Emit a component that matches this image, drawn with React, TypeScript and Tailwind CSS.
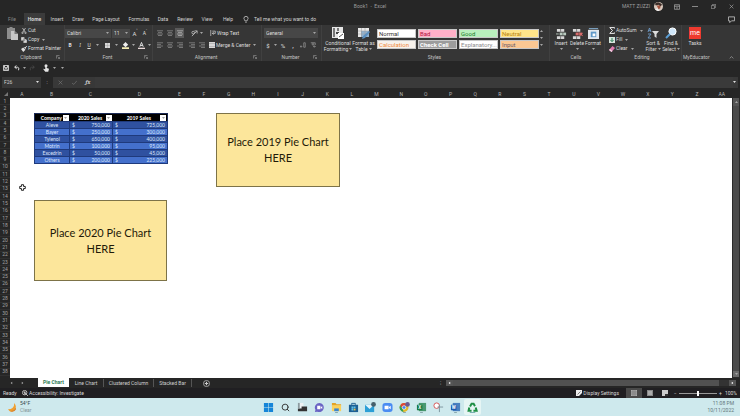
import type { ReactNode } from "react";
import { Search } from "lucide-react";

const sales = [
  ["Aleve", "750,000", "725,000"],
  ["Bayer", "250,000", "300,000"],
  ["Tylenol", "650,000", "400,000"],
  ["Motrin", "100,000", "95,000"],
  ["Excedrin", "50,000", "45,000"],
  ["Others", "200,000", "225,000"],
];

const columns = "A B C D E F G H I J K L M N O P Q R S T U V W X Y Z AA".split(" ");
const rows = Array.from({ length: 38 }, (_, i) => i + 1);

const menu: [string, string][] = [
  ["File", "w-6 text-[#8a8a8a]"],
  ["Home", "w-[21px] bg-[#3b3b3b] font-bold"],
  ["Insert", "w-6"],
  ["Draw", "w-[18px]"],
  ["Page Layout", "w-[38px]"],
  ["Formulas", "w-7"],
  ["Data", "w-5"],
  ["Review", "w-6"],
  ["View", "w-5"],
  ["Help", "w-[22px]"],
];

const styles: [string, string][] = [
  ["Normal", "bg-white text-[#333]"],
  ["Bad", "bg-[#ffb0c8] text-[#b0103c]"],
  ["Good", "bg-[#b9f0bd] text-[#1c7a2c]"],
  ["Neutral", "bg-[#ffe58a] text-[#b98410]"],
  ["Calculation", "bg-[#f7f2ec] text-[#f08a3c]"],
  ["Check Cell", "bg-[#9c9c9c] text-white font-bold"],
  ["Explanatory...", "bg-white text-[#8d8d8d]"],
  ["Input", "bg-[#fcc893] text-[#6a5a6a]"],
];

function Caret({ className = "" }: { className?: string }) {
  return (
    <svg viewBox="0 0 6 4" className={`h-[2px] w-[3px] shrink-0 fill-[#a5a5a5] ${className}`}>
      <path d="M0 0h6L3 4z" />
    </svg>
  );
}

function Icon({ label, className = "w-[10px]", children }: { label: string; className?: string; children: ReactNode }) {
  return (
    <button aria-label={label} className={`flex h-[10px] shrink-0 items-center justify-center ${className}`}>
      {children}
    </button>
  );
}

function Lines({ align, bright }: { align: "left" | "center" | "right"; bright?: boolean }) {
  const x = align === "left" ? 0 : align === "center" ? 1 : 2;
  return (
    <svg viewBox="0 0 6 6" className="size-[6px]" stroke={bright ? "#b0b0b0" : "#858585"} strokeWidth=".8">
      <path d={`M0 .8h6M${x} 2.4h4M0 4h6M${x} 5.5h4`} />
    </svg>
  );
}

function Group({ label, launcher, className, children }: { label: string; launcher?: boolean; className: string; children: ReactNode }) {
  return (
    <section aria-label={label} className={`flex shrink-0 flex-col border-r border-[#404040] ${className}`}>
      <div className="flex h-7 pt-px">{children}</div>
      <div className="flex h-2 items-center">
        <span className="w-[6px]" />
        <span className="flex-1 text-center text-[#c4c4c4]">{label}</span>
        <span className="w-2">
          {launcher && (
            <svg viewBox="0 0 8 8" className="size-1" fill="none" stroke="#a8a8a8">
              <path d="M1 7V1h6M3 3l4 4M7 4v3H4" />
            </svg>
          )}
        </span>
      </div>
    </section>
  );
}

function BigButton({ lines, caret, className = "w-4", children }: { lines: string[]; caret?: boolean; className?: string; children: ReactNode }) {
  return (
    <button className={`flex shrink-0 flex-col items-center ${className}`}>
      <span className="flex h-[14px] items-center justify-center">{children}</span>
      {lines.map((line, i) => (
        <span key={line} className="flex h-[6px] items-center gap-px leading-[6px] whitespace-nowrap">
          {line}
          {caret && i === lines.length - 1 && lines.length > 1 && <Caret />}
        </span>
      ))}
      {caret && lines.length === 1 && <Caret className="mt-[2px]" />}
    </button>
  );
}

function SmallButton({ label, caret, children }: { label: string; caret?: boolean; children: ReactNode }) {
  return (
    <button className="flex h-[9px] items-center gap-px whitespace-nowrap">
      <span className="flex w-[7px] justify-center">{children}</span>
      {label}
      {caret && <Caret className="ml-[2px]" />}
    </button>
  );
}

function CellsIcon({ accent, arrow }: { accent: string; arrow: string }) {
  return (
    <svg viewBox="0 0 12 12" className="size-[11px]">
      <path fill="#d8d8d8" d="M1 1h8v3H1zM1 9h8v3H1z" />
      <path fill={accent} d="M4 5h7v3H4z" />
      <path stroke="#333" strokeWidth=".6" d="M5 1v3M5 9v3M7.500 5v3" />
      <path d={arrow} stroke={accent} fill="none" />
    </svg>
  );
}

function Ribbon() {
  return (
    <div className="flex h-9 shrink-0 overflow-hidden bg-[#363636] text-[#dedede]">
      <Group label="Clipboard" launcher className="w-[65px]">
        <Icon label="Paste" className="ml-[6px] h-[14px] w-[12px]">
          <svg viewBox="0 0 12 13" className="h-[13px] w-[12px]">
            <path fill="#8d8d8d" d="M1 1h2.500V0h3v1H9v11H1z" />
            <path fill="#c6c6c6" d="M5 4h3.500L12 7v6H5z" />
            <path fill="#777" d="M8.500 4v3H12z" />
          </svg>
        </Icon>
        <div className="ml-[2px] flex flex-col">
          <SmallButton label="Cut">
            <svg viewBox="0 0 8 8" className="size-[6px]" fill="none" stroke="#d0d0d0">
              <path d="M2 0l3.500 5.500M6 0L2.500 5.500" /><circle cx="2" cy="6.500" r="1" /><circle cx="6" cy="6.500" r="1" />
            </svg>
          </SmallButton>
          <SmallButton label="Copy" caret>
            <svg viewBox="0 0 8 8" className="size-[6px]" fill="#dadada" stroke="#363636" strokeWidth=".5">
              <path d="M0 0h4l1 1v4H0zM3 2.500h3.500L8 4v4H3z" />
            </svg>
          </SmallButton>
          <SmallButton label="Format Painter">
            <svg viewBox="0 0 8 8" className="size-[6px]">
              <path fill="#e0e0e0" d="M0 4l3-2 3 3-3 3zM4 2l2-1 1 1-1 2z" /><path stroke="#e0e0e0" d="M5.500 2.500L8 0" />
            </svg>
          </SmallButton>
        </div>
      </Group>

      <Group label="Font" launcher className="w-[88px]">
        <div className="flex flex-col gap-[2px] pt-[2px]">
          <div className="flex h-[10px] items-center">
            <label className="flex h-[9px] w-[46px] items-center bg-[#474747] pr-[2px] pl-[2px]">
              <select aria-label="Font name" className="w-full appearance-none"><option>Calibri</option></select>
              <Caret />
            </label>
            <label className="ml-px flex h-[9px] w-[18px] items-center bg-[#474747] pr-[2px] pl-[2px]">
              <select aria-label="Font size" className="w-full appearance-none"><option>11</option></select>
              <Caret />
            </label>
            <Icon label="Increase font size"><span className="text-[6px]">A<sup>˄</sup></span></Icon>
            <Icon label="Decrease font size">A<sup>˅</sup></Icon>
          </div>
          <div className="flex h-[10px] items-center">
            <Icon label="Bold"><b>B</b></Icon>
            <Icon label="Italic"><i className="font-serif">I</i></Icon>
            <Icon label="Underline" className="w-2"><u>U</u></Icon>
            <Icon label="Underline options" className="w-2"><Caret /></Icon>
            <Icon label="Borders" className="w-3">
              <svg viewBox="0 0 6 6" className="size-[5px]"><path fill="#d6d6d6" d="M0 0h6v6H0z" /><path stroke="#999" strokeWidth=".5" d="M3 0v6M0 3h6" /></svg>
            </Icon>
            <Icon label="Border options" className="w-[6px]"><Caret /></Icon>
            <Icon label="Fill colour" className="w-3">
              <svg viewBox="0 0 8 8" className="size-[7px]"><path fill="#eee" d="M1 3l3-3 3 3-3 3z" /><path fill="#f5ecb4" d="M0 6h8v2H0z" /></svg>
            </Icon>
            <Icon label="Fill options" className="w-[4px]"><Caret /></Icon>
            <Icon label="Font colour" className="w-3">
              <svg viewBox="0 0 8 8" className="size-[7px]"><path fill="none" stroke="#eee" d="M2 5.500L4 .5l2 5M2.700 4h2.600" /><path fill="#eadada" d="M0 6.500h8V8H0z" /></svg>
            </Icon>
            <Icon label="Font colour options" className="w-[4px]"><Caret /></Icon>
          </div>
        </div>
      </Group>

      <Group label="Alignment" launcher className="w-[109px]">
        <div className="flex flex-col gap-[2px] pt-[2px] pl-[2px]">
          <div className="flex h-[10px] items-center">
            <Icon label="Top align"><Lines align="center" /></Icon>
            <Icon label="Middle align"><Lines align="center" /></Icon>
            <Icon label="Bottom align" className="w-[9px] bg-[#5a5a5a]"><Lines align="center" bright /></Icon>
            <Icon label="Orientation" className="ml-1 w-3">
              <svg viewBox="0 0 8 8" className="size-[7px]" fill="none" stroke="#b8b8b8"><path d="M1 7l6-6M4 1h3v3" /><circle cx="2.500" cy="3" r="1.500" /></svg>
            </Icon>
            <Caret />
            <button className="ml-[7px] flex items-center gap-px whitespace-nowrap">
              <svg viewBox="0 0 8 8" className="size-[6px]" fill="none" stroke="#c8c8c8"><path d="M1 0v8M3 1.500h4v3H3M5 3L3 4.500 5 6" /></svg>
              Wrap Text
            </button>
          </div>
          <div className="flex h-[10px] items-center">
            <Icon label="Align left"><Lines align="left" /></Icon>
            <Icon label="Centre"><Lines align="center" /></Icon>
            <Icon label="Align right" className="w-[9px]"><Lines align="right" /></Icon>
            <Icon label="Decrease indent" className="ml-[3px] w-[10px]"><Lines align="right" /></Icon>
            <Icon label="Increase indent" className="w-[9px]"><Lines align="right" /></Icon>
            <button className="ml-[3px] flex items-center gap-px whitespace-nowrap">
              <svg viewBox="0 0 6 6" className="size-[6px]"><path fill="#d9d9d9" d="M0 0h6v6H0z" /><path stroke="#888" strokeWidth=".4" d="M0 1.500h6M0 4.500h6" /></svg>
              Merge &amp; Center
              <Caret className="ml-[2px]" />
            </button>
          </div>
        </div>
      </Group>

      <Group label="Number" launcher className="w-[60px]">
        <div className="flex flex-col gap-[2px] pt-[2px] pl-[2px]">
          <label className="flex h-[10px] w-[54px] items-center bg-[#474747] px-[2px]">
            <select aria-label="Number format" className="w-full appearance-none"><option>General</option></select>
            <Caret />
          </label>
          <div className="flex h-[10px] items-center text-[6px]">
            <Icon label="Accounting format" className="w-2">$</Icon>
            <Icon label="Accounting options" className="w-[6px]"><Caret /></Icon>
            <Icon label="Percent"><span>%</span></Icon>
            <Icon label="Comma"><b>,</b></Icon>
            <Icon label="Increase decimal">
              <svg viewBox="0 0 8 8" className="size-[6px]" fill="none" stroke="#909090"><path d="M0 6h3M1.500 4.500L0 6l1.500 1.500M5 1h2v6H5z" /></svg>
            </Icon>
            <Icon label="Decrease decimal">
              <svg viewBox="0 0 8 8" className="size-[6px]" fill="none" stroke="#909090"><path d="M1 1h6v3M3 1v3h2V1M4 6h3M5.500 4.500L7 6 5.500 7.500" /></svg>
            </Icon>
          </div>
        </div>
      </Group>

      <Group label="Styles" className="w-[228px]">
        <BigButton lines={["Conditional", "Formatting"]} caret className="ml-[2px] w-7">
          <svg viewBox="0 0 12 12" className="size-3">
            <path fill="#e6e6e6" d="M0 0h11v11H0z" /><path fill="#777" d="M1 1h2v9H1zM5 1h2v3H5z" /><path fill="#444" d="M4 5h3v2H4z" />
            <path fill="#fff" d="M6 6h6v6H6z" /><path stroke="#555" d="M7 10l4-3" />
          </svg>
        </BigButton>
        <BigButton lines={["Format as", "Table"]} caret className="w-[23px]">
          <svg viewBox="0 0 12 12" className="size-3">
            <path fill="#e8e8e8" d="M0 1h11v9H0z" /><path fill="#92b2cf" d="M3 4h8v6H3z" /><path stroke="#999" strokeWidth=".5" d="M0 4h11M0 7h11M3.500 1v9M7 1v9" /><path fill="#5b8fbf" d="M4 12l1-3 6-5 1 1-5 6z" />
          </svg>
        </BigButton>
        <div className="ml-[2px] grid h-[23px] grid-cols-4 content-start gap-[2px] pt-[3px]">
          {styles.map(([name, look]) => (
            <button key={name} className={`h-[9px] w-[39px] border border-[#c8c8c8] pl-px text-left text-[6px] leading-[7px] ${look}`}>{name}</button>
          ))}
        </div>
        <div className="ml-px flex flex-col gap-[5px] pt-[4px]">
          <Caret className="rotate-180" /><Caret /><Caret />
        </div>
      </Group>

      <Group label="Cells" className="w-[55px]">
        <BigButton lines={["Insert"]} caret className="ml-[3px] w-4"><CellsIcon accent="#b9cbbf" arrow="M3 6.500H0" /></BigButton>
        <BigButton lines={["Delete"]} caret><CellsIcon accent="#d86b6b" arrow="M8 5l4 4M12 5L8 9" /></BigButton>
        <BigButton lines={["Format"]} caret>
          <svg viewBox="0 0 12 12" className="size-[11px]"><path fill="#e2e8ee" d="M0 2h12v10H0z" /><path fill="#5f98c8" d="M3 4h6v6H3z" /><path fill="#fff" d="M5 6h3v3H5z" /><path stroke="#8cbbe0" d="M1 .7h10" /></svg>
        </BigButton>
      </Group>

      <Group label="Editing" className="w-[77px]">
        <div className="ml-[3px] flex w-[36px] flex-col">
          <SmallButton label="AutoSum" caret>
            <svg viewBox="0 0 6 7" className="h-[7px] w-[6px]" fill="none" stroke="#eee"><path d="M5.500 1.500V.6H.8L3.500 3.500.8 6.400h4.700V5.500" /></svg>
          </SmallButton>
          <SmallButton label="Fill" caret>
            <svg viewBox="0 0 6 6" className="size-[6px]"><path fill="#d6e6dd" d="M0 0h6v6H0z" /><path stroke="#2d8058" fill="none" d="M3 1v3.500M1.500 3L3 4.600 4.500 3" /></svg>
          </SmallButton>
          <SmallButton label="Clear" caret>
            <svg viewBox="0 0 6 6" className="size-[6px]"><path fill="#e07ab0" d="M0 4l3.500-4L6 2 2.500 6z" /><path fill="#f2d5e4" d="M0 4l1-1 2.500 2-1 1z" /></svg>
          </SmallButton>
        </div>
        <BigButton lines={["Sort &", "Filter"]} caret className="w-[18px]">
          <svg viewBox="0 0 12 12" className="size-3"><path fill="none" stroke="#6f9cc8" strokeWidth=".9" d="M1 5l1.500-4L4 5M1.500 3.700h2M1 7h3l-3 4h3" /><path fill="#dcdcdc" d="M5 4h7L9.500 7v4L7.500 9.500V7z" /></svg>
        </BigButton>
        <BigButton lines={["Find &", "Select"]} caret className="w-[18px]">
          <svg viewBox="0 0 12 12" className="size-3"><circle cx="7.500" cy="4.500" r="3.600" fill="#cfe6f8" stroke="#fff" /><path stroke="#5c9fd6" strokeWidth="2" d="M5 7l-4 4" /></svg>
        </BigButton>
      </Group>

      <section aria-label="MyEducator" className="flex min-w-0 flex-1 flex-col">
        <div className="flex h-7 pt-px pl-1">
          <BigButton lines={["Tasks"]} className="w-[18px]">
            <span className="flex size-3 items-center justify-center bg-[#ee3a2f] text-[7px] leading-none text-white">me</span>
          </BigButton>
        </div>
        <div className="flex h-2 items-center justify-between pr-[6px] pl-px">
          <span className="text-[#c4c4c4]">MyEducator</span>
          <svg viewBox="0 0 8 5" className="h-[3px] w-[5px]" fill="none" stroke="#bbb"><path d="M1 4l3-3 3 3" /></svg>
        </div>
      </section>
    </div>
  );
}

function TopBar() {
  return (
    <>
      <header className="grid h-[13px] shrink-0 grid-cols-3 items-center text-[#9d9d9d]">
        <span />
        <span className="text-center">Book1&nbsp; -&nbsp; Excel</span>
        <div className="flex items-center justify-end">
          <span>MATT ZUZZI</span>
          <svg viewBox="0 0 10 10" className="mr-[9px] ml-1 size-[9px]">
            <circle cx="5" cy="5" r="5" fill="#d9c8bd" /><path fill="#3b2d28" d="M1 2Q5-2 9 3L7 5 5 3 2 4z" /><path fill="#a5543f" d="M3 4h4v3L5 8z" /><path fill="#eee" d="M1 8l3-1 2 3H4z" />
          </svg>
          <Icon label="Ribbon display options" className="w-[10px]">
            <svg viewBox="0 0 8 8" className="size-[6px]" fill="none" stroke="#aaa"><path d="M.5 1h7v6h-7zM.5 3h7M4 6.500V4" /></svg>
          </Icon>
          <Icon label="Minimize" className="ml-2 w-[10px]"><span className="h-px w-[6px] bg-[#888]" /></Icon>
          <Icon label="Restore" className="ml-2 w-[10px]">
            <svg viewBox="0 0 8 8" className="size-[5px]" fill="none" stroke="#aaa"><path d="M.5 2.500h5v5h-5zM2.500 2V.5h5v5H6" /></svg>
          </Icon>
          <Icon label="Close" className="mr-1 ml-2 w-[10px]">
            <svg viewBox="0 0 8 8" className="size-[5px]" stroke="#aaa"><path d="M1 1l6 6M7 1L1 7" /></svg>
          </Icon>
        </div>
      </header>
      <nav className="flex h-3 shrink-0 items-center text-[#d4d4d4]">
        {menu.map(([name, look]) => (
          <button key={name} className={`h-full shrink-0 text-center whitespace-nowrap ${look}`}>{name}</button>
        ))}
        <svg viewBox="0 0 8 10" className="mr-[5px] ml-1 h-[7px] w-[6px]" fill="none" stroke="#ddd"><path d="M2.500 7C2.500 5.500 1 5 1 3.500a3 3 0 016 0C7 5 5.500 5.500 5.500 7zM3 9h2" /></svg>
        <button className="whitespace-nowrap">Tell me what you want to do</button>
        <button aria-label="Comments" className="mr-[5px] ml-auto">
          <svg viewBox="0 0 8 8" className="size-[7px]" fill="none" stroke="#bbb"><path d="M.5 1h7v4.500H4L2 7.500v-2H.5z" /></svg>
        </button>
      </nav>
    </>
  );
}

function QuickAccess() {
  return (
    <div className="flex h-[14px] shrink-0 items-center pl-[2px]">
      <Icon label="Save" className="w-2">
        <svg viewBox="0 0 8 8" className="size-[6px]" fill="none" stroke="#ddd" strokeWidth="1.200"><path d="M.6.6h6.800v6.800H.6zM2 1v2.500h4V1M2.500 7V5h3v2" /></svg>
      </Icon>
      <Icon label="Undo" className="ml-[3px] w-2">
        <svg viewBox="0 0 8 8" className="size-[6px]" fill="none" stroke="#ddd" strokeWidth="1.300"><path d="M3 .5L1 3l2.500 2M1 3h4q2.500.5 1 4" /></svg>
      </Icon>
      <Icon label="Undo options" className="w-[6px]"><Caret /></Icon>
      <Icon label="Redo" className="w-[10px]">
        <svg viewBox="0 0 8 8" className="size-[6px]" fill="none" stroke="#4d4d4d"><path d="M5 .5L7 3 4.500 5M7 3H3Q.5 3.500 2 7" /></svg>
      </Icon>
      <Icon label="Touch mode" className="ml-1 w-[10px]">
        <svg viewBox="0 0 8 10" className="h-[8px] w-[6px]" fill="#e4e4e4"><circle cx="4" cy="2" r="2" /><path d="M3 2h2v3l3 1-1 4H3L0 6l3 .5z" /></svg>
      </Icon>
      <Icon label="Touch options" className="w-[6px]"><Caret /></Icon>
      <Icon label="Customize" className="w-[10px]"><Caret /></Icon>
    </div>
  );
}

function FormulaBar() {
  return (
    <div className="flex h-[14px] shrink-0 items-center px-[2px] text-[#cfcfcf]">
      <label className="flex h-[11px] w-[39px] items-center bg-[#383838] px-[2px]">
        <input aria-label="Name box" defaultValue="F26" className="w-full min-w-0 outline-none" />
        <Caret className="fill-[#e0e0e0]" />
      </label>
      <span className="w-3 text-center">:</span>
      <div className="flex h-[11px] flex-1 items-center bg-[#383838]">
        <Icon label="Cancel" className="w-[14px]"><svg viewBox="0 0 8 8" className="size-[5px]" stroke="#777"><path d="M1 1l6 6M7 1L1 7" /></svg></Icon>
        <Icon label="Enter" className="w-[14px]"><svg viewBox="0 0 8 8" className="size-[5px]" fill="none" stroke="#777"><path d="M0 5l3 2 5-6" /></svg></Icon>
        <Icon label="Insert function" className="w-[14px]"><b className="font-serif text-[6px] italic">fx</b></Icon>
        <input aria-label="Formula" className="h-full min-w-0 flex-1 bg-[#3a3a3a] outline-none" />
        <Caret className="mr-[2px] fill-[#e0e0e0]" />
      </div>
    </div>
  );
}

function FilterButton() {
  return (
    <button aria-label="Filter" className="flex size-[6px] shrink-0 items-center justify-center bg-white">
      <Caret className="fill-[#555]" />
    </button>
  );
}

function SalesTable() {
  return (
    <table className="w-full table-fixed border-collapse border border-[#1b2a55] text-[5px] leading-[6px] text-[#dfe7fa]">
      <colgroup><col className="w-[35px]" /><col className="w-[43px]" /><col className="w-[55px]" /></colgroup>
      <thead className="bg-black text-white">
        <tr className="h-2">
          {["Company", "2020 Sales", "2019 Sales"].map((name) => (
            <th key={name} className="p-0">
              <span className="flex items-center pr-px">
                <span className="flex-1 pl-[5px] text-center whitespace-nowrap">{name}</span>
                <FilterButton />
              </span>
            </th>
          ))}
        </tr>
      </thead>
      <tbody>
        {sales.map(([name, a, b]) => (
          <tr key={name} className="h-[7px] odd:bg-[#2f51a0] even:bg-[#4470cc]">
            <td className="border border-[#1f3a7c] p-0 text-center">{name}</td>
            {[a, b].map((value, i) => (
              <td key={i} className="border border-[#1f3a7c] p-0 px-[2px]">
                <span className="flex justify-between"><span>$</span><span>{value}</span></span>
              </td>
            ))}
          </tr>
        ))}
      </tbody>
    </table>
  );
}

function Placeholder({ year, className }: { year: string; className: string }) {
  return (
    <div className={`flex flex-col items-center justify-center border border-[#7d7348] bg-[#fce69b] text-center text-[11px] leading-4 text-[#1f1a08] ${className}`}>
      <p className="whitespace-nowrap">Place {year} Pie Chart</p>
      <p>HERE</p>
    </div>
  );
}

function Sheet() {
  return (
    <>
      <div className="flex h-2 shrink-0 items-center text-[#b5b5b5]">
        <span className="flex w-[10px] justify-end pr-[2px]"><svg viewBox="0 0 4 4" className="size-1" fill="#777"><path d="M4 0v4H0z" /></svg></span>
        <div className="grid flex-1 grid-cols-[24px_35px_43px_55px_repeat(23,minmax(0,1fr))] text-center">
          {columns.map((c) => <span key={c}>{c}</span>)}
        </div>
        <span className="w-[6px]" />
      </div>
      <div className="flex min-h-0 flex-1">
        <div className="flex w-[10px] shrink-0 flex-col pb-[2px] text-center leading-none text-[#a2a2a2]">
          {rows.map((r) => <span key={r} className="flex min-h-0 flex-1 items-center justify-center border-b border-[#303030]">{r}</span>)}
        </div>
        <main className="relative flex min-w-0 flex-1 items-start bg-white pt-[15px] pl-6 font-['Lato','Noto_Sans',sans-serif]">
          <div className="w-[133px] shrink-0">
            <SalesTable />
            <Placeholder year="2020" className="mt-9 h-[81px]" />
          </div>
          <Placeholder year="2019" className="ml-[49px] h-[74px] w-[124px] shrink-0" />
          <svg viewBox="0 0 10 10" className="absolute top-[86px] left-[9px] size-[7px]" fill="#fff" stroke="#111" strokeWidth="1.300"><path d="M3.500 1h3v2.500H9v3H6.500V9h-3V6.500H1v-3h2.500z" /></svg>
        </main>
        <div className="flex w-2 shrink-0 flex-col items-center bg-[#2b2b2b] pb-px">
          <button aria-label="Scroll up" className="flex h-2 w-[6px] items-center justify-center bg-[#555]"><Caret className="rotate-180" /></button>
          <span className="w-[6px] flex-1 bg-[#4b4b4b]" />
          <button aria-label="Scroll down" className="flex h-[6px] w-[6px] items-center justify-center bg-[#6a6a6a]"><Caret /></button>
        </div>
      </div>
    </>
  );
}

function SheetTabs() {
  return (
    <div className="flex h-[10px] shrink-0 items-center text-[#cfcfcf]">
      <div className="flex w-[38px] justify-start gap-2 pl-[10px]"><Caret className="rotate-90" /><Caret className="-rotate-90" /></div>
      <button className="h-[9px] w-[31px] self-start bg-white font-bold text-[#2c7a53]">Pie Chart</button>
      <button className="w-[34px]">Line Chart</button>
      <button className="h-2 w-[51px] border-x border-[#555] leading-[7px] whitespace-nowrap">Clustered Column</button>
      <button className="h-2 w-[38px] border-r border-[#555] leading-[7px] whitespace-nowrap">Stacked Bar</button>
      <button aria-label="New sheet" className="ml-[11px]">
        <svg viewBox="0 0 8 8" className="size-[7px]" fill="none" stroke="#ccc" strokeWidth=".8"><circle cx="4" cy="4" r="3.500" /><path d="M4 2v4M2 4h4" strokeWidth="1.200" /></svg>
      </button>
      <div className="mr-1 ml-auto flex w-[40%] items-center">
        <span className="mr-[5px] text-[#999]">⁝</span>
        <div className="flex h-[6px] flex-1 items-center bg-[#333]">
          <span className="flex h-full w-[7px] items-center justify-center bg-[#555]"><Caret className="rotate-90 fill-white" /></span>
          <span className="h-full flex-1 bg-[#515151]" />
          <span className="ml-[10px] flex h-full w-[7px] items-center justify-center bg-[#555]"><Caret className="-rotate-90 fill-white" /></span>
        </div>
      </div>
    </div>
  );
}

function StatusBar() {
  return (
    <footer className="flex h-[10px] shrink-0 items-center bg-[#201f22] px-[3px] text-[#d8d8d8]">
      <span className="w-[19px]">Ready</span>
      <button className="flex items-center gap-px whitespace-nowrap">
        <svg viewBox="0 0 8 8" className="size-[6px]" fill="none" stroke="#ddd"><circle cx="3.500" cy="3.500" r="3" /><path d="M2 3h3M3.500 2v4M4 4l4 4" /></svg>
        Accessibility: Investigate
      </button>
      <button className="ml-auto flex items-center gap-px whitespace-nowrap">
        <svg viewBox="0 0 8 8" className="size-[6px]" fill="#eee"><path d="M0 0h8v4L4 8H0z" /><path stroke="#555" d="M2 6l4-4" /></svg>
        Display Settings
      </button>
      <div className="ml-[7px] flex items-center text-[#a8a8a8]">
        <Icon label="Normal view" className="w-4 bg-[#4a4a4a]"><svg viewBox="0 0 6 6" className="size-[6px]"><path fill="#aaa" d="M0 0h6v6H0z" /><path stroke="#666" strokeWidth=".5" d="M2 0v6M4 0v6M0 2h6M0 4h6" /></svg></Icon>
        <Icon label="Page layout view" className="w-4"><svg viewBox="0 0 6 6" className="size-[6px]"><path fill="#888" d="M0 0h6v6H0z" /><path fill="#aaa" d="M1 1h4v4H1z" /></svg></Icon>
        <Icon label="Page break view" className="w-[14px]"><svg viewBox="0 0 6 6" className="size-[6px]"><path fill="#ccc" d="M0 0h6v6H0z" /><path fill="#333" d="M3 4h3v2H3z" /></svg></Icon>
      </div>
      <button aria-label="Zoom out" className="w-[7px]">−</button>
      <input
        type="range"
        aria-label="Zoom"
        className="h-[6px] w-[38px] appearance-none bg-[linear-gradient(#999,#999)] bg-[length:100%_1px] bg-center bg-no-repeat [&::-webkit-slider-thumb]:h-[5px] [&::-webkit-slider-thumb]:w-[2px] [&::-webkit-slider-thumb]:appearance-none [&::-webkit-slider-thumb]:bg-white"
      />
      <button aria-label="Zoom in" className="w-[7px]">+</button>
      <span className="w-[13px] text-right">100%</span>
    </footer>
  );
}

function TaskbarApp({ label, children, active }: { label: string; children: ReactNode; active?: boolean }) {
  return (
    <button aria-label={label} className={`flex h-4 w-[17px] items-center justify-center ${active ? "rounded-[2px] bg-[#e6f5f4]" : ""}`}>
      <svg viewBox="0 0 12 12" className="size-[11px]">{children}</svg>
    </button>
  );
}

function Office({ letter, color }: { letter: string; color: string }) {
  return (
    <>
      <path fill={color} opacity=".75" d="M3 1h8v9H3z" />
      <path fill={color} d="M1 3h6v6H1z" />
      <text x="4" y="7.800" fontSize="5" fontWeight="bold" textAnchor="middle" fill="#fff">{letter}</text>
      <path stroke="#68868a" strokeWidth=".8" d="M4.500 11.600h3" />
    </>
  );
}

function Taskbar() {
  return (
    <div className="grid h-[18px] shrink-0 grid-cols-[1fr_auto_1fr] items-center bg-[#cee9ed]">
      <button className="flex items-center gap-[3px] pl-2 text-left">
        <svg viewBox="0 0 10 10" className="size-[9px]"><path fill="#f0a030" d="M7 0q4 5-1 9-4 2-6-2Q7 7 7 0z" /><path fill="#d9822b" d="M8.500 5Q7 9 2 9q5 2 7-2z" /></svg>
        <span className="leading-[7px]"><span className="block text-[#36484b]">54°F</span><span className="block text-[#86989b]">Clear</span></span>
      </button>
      <div className="flex items-center">
        <TaskbarApp label="Start"><path fill="#1585d8" d="M1 1h4.700v4.700H1zM6.300 1H11v4.700H6.300zM1 6.300h4.700V11H1zM6.300 6.300H11V11H6.300z" /></TaskbarApp>
        <button aria-label="Search" className="flex w-[17px] justify-center"><Search className="size-[9px] text-[#333]" strokeWidth={2.5} /></button>
        <TaskbarApp label="Task view"><path fill="#eef2f3" d="M1 1h6v6H1z" /><path fill="#333" d="M5 5h6v5H5zM1 7h4v3H1z" /><path fill="#8b9ba0" d="M1 1h2v6H1z" /></TaskbarApp>
        <TaskbarApp label="Chat"><path fill="#6a64c4" d="M6 1a5 5 0 11-2.500 9.500L1 11l.6-2.500A5 5 0 016 1z" /><path fill="#fff" d="M3.500 4h3.500v4H3.500zM7.500 5.500L9 4.500v3l-1.500-1z" /></TaskbarApp>
        <TaskbarApp label="File Explorer"><path fill="#e3a325" d="M1 1h4l1 1.500h5V4H1z" /><path fill="#fbd15c" d="M1 3.500h10V10H1z" /><path fill="#3b86cf" d="M3.500 7h5v3h-5z" /><path stroke="#68868a" strokeWidth=".8" d="M4.500 11.600h3" /></TaskbarApp>
        <TaskbarApp label="Store"><path fill="#1d5f93" d="M1 3h10v8H1z" /><path fill="none" stroke="#1d5f93" d="M4 3V1.500h4V3" /><path fill="#e8c14c" d="M6.200 7.200h2v2h-2z" /><path fill="#5ec1e8" d="M3.800 4.800h2v2h-2zM6.200 4.800h2v2h-2zM3.800 7.200h2v2h-2z" /></TaskbarApp>
        <TaskbarApp label="Mail"><path fill="#2b9fd6" d="M0 3h10v8H0z" /><path fill="#e4f5fc" d="M0 3h10L5 7.500z" /><circle cx="9.300" cy="2.700" r="2.600" fill="#46606b" /></TaskbarApp>
        <TaskbarApp label="Zoom"><rect x=".5" y="1" width="11" height="10" rx="3" fill="#4a8cf2" /><path fill="#fff" d="M2.800 4h4.400v4H2.800zM7.700 5.500L9.500 4v4L7.700 6.500z" /></TaskbarApp>
        <TaskbarApp label="Chrome"><circle cx="5.500" cy="6" r="4.800" fill="#e2b92c" /><path fill="#dd4637" d="M1.300 3.600A4.800 4.800 0 0110 4.200H5.500L3.500 7z" /><path fill="#2f9e55" d="M1.300 3.600L4 8l1 2.800A4.800 4.800 0 011.300 3.600z" /><circle cx="5.500" cy="6" r="2" fill="#4285f4" stroke="#fff" strokeWidth=".7" /><circle cx="9.300" cy="2.600" r="2.500" fill="#6b5a90" /><path stroke="#68868a" strokeWidth=".8" d="M4.500 11.600h3" /></TaskbarApp>
        <TaskbarApp label="Excel"><Office letter="X" color="#1c7d46" /></TaskbarApp>
        <TaskbarApp label="Snipping Tool"><circle cx="4" cy="4" r="3" fill="#fff" stroke="#d55050" /><path stroke="#79929b" d="M5 5.500h6M7 3v8" /></TaskbarApp>
        <TaskbarApp label="Word"><Office letter="W" color="#1e5cb0" /></TaskbarApp>
        <TaskbarApp label="Recycle" active><path fill="none" stroke="#1f8f45" strokeWidth="2.200" d="M3.300 5L5 2h2.200l1.500 2.500M9.500 6l1 3.500H7M5 9.500H1.700L2.500 6" /><path stroke="#3c8b8f" strokeWidth=".8" d="M3 11.600h6" /></TaskbarApp>
      </div>
      <div className="pr-[6px] text-right leading-[7px] text-[#63777a]">
        <div>11:08 PM</div>
        <div>10/11/2022</div>
      </div>
    </div>
  );
}

export default function App() {
  return (
    <div className="flex h-screen flex-col overflow-hidden bg-[#262626] font-['Roboto','Noto_Sans',sans-serif] text-[5px] leading-[7px]">
      <TopBar />
      <Ribbon />
      <QuickAccess />
      <FormulaBar />
      <div className="h-px shrink-0" />
      <Sheet />
      <SheetTabs />
      <StatusBar />
      <Taskbar />
    </div>
  );
}
